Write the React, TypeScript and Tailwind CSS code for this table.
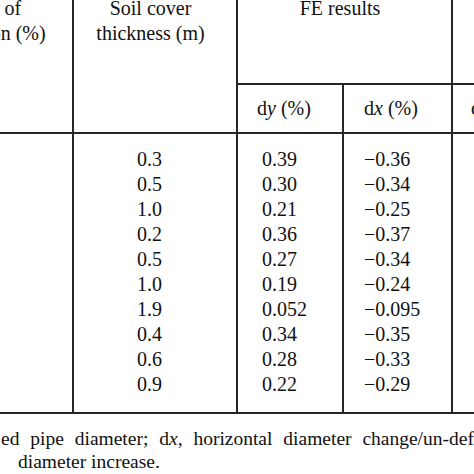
import React from 'react';

const soil = ['0.3', '0.5', '1.0', '0.2', '0.5', '1.0', '1.9', '0.4', '0.6', '0.9'];
const dy = ['0.39', '0.30', '0.21', '0.36', '0.27', '0.19', '0.052', '0.34', '0.28', '0.22'];
const dx = ['−0.36', '−0.34', '−0.25', '−0.37', '−0.34', '−0.24', '−0.095', '−0.35', '−0.33', '−0.29'];

const Column: React.FC<{ values: string[]; pad: string }> = ({ values, pad }) => (
  <div className={`bg-white pt-[13px] ${pad}`}>
    {values.map((v, i) => (
      <div key={i} className="leading-[25px]">
        {v}
      </div>
    ))}
  </div>
);

const App: React.FC = () => {
  return (
    <div
      className="w-[474px] h-[474px] overflow-hidden bg-white text-[#111111]"
      style={{ fontFamily: '"Liberation Serif", "Times New Roman", serif' }}
    >
      {/* Table */}
      <div className="ml-[-127px] mt-[-10px] w-[680px] grid grid-cols-[199px_162px_104px_107px_100px] grid-rows-[93px_47px_278px] gap-[2px] pb-[2px] bg-[#262626] text-[20px] leading-[25px]">
        <div className="row-span-2 bg-white pt-[6px] pl-[18px] text-center">
          <div>Degree of</div>
          <div>compaction (%)</div>
        </div>
        <div className="row-span-2 bg-white pt-[6px] pr-[9px] text-center">
          <div>Soil cover</div>
          <div>thickness (m)</div>
        </div>
        <div className="col-span-2 bg-white pt-[6px] pr-[9px] text-center">FE results</div>
        <div className="bg-white" />

        <div className="bg-white pt-[11px] pl-[19px]">
          d<i>y</i> (%)
        </div>
        <div className="bg-white pt-[11px] pl-[20px]">
          d<i>x</i> (%)
        </div>
        <div className="bg-white pt-[11px] pl-[18px] whitespace-nowrap">
          d<i>y</i> (%)
        </div>

        <div className="bg-white" />
        <Column values={soil} pad="pl-[63px]" />
        <Column values={dy} pad="pl-[24px]" />
        <Column values={dx} pad="pl-[20px]" />
        <div className="bg-white" />
      </div>

      {/* Note */}
      <div className="mt-[13px] text-[19.5px] leading-[23px] whitespace-nowrap">
        <div className="pl-[1px] [word-spacing:6px]">
          ed pipe diameter; d<i>x</i>, horizontal diameter change/un-deformed pipe diameter
        </div>
        <div className="pl-[18px]">diameter increase.</div>
      </div>
    </div>
  );
};

export default App;
